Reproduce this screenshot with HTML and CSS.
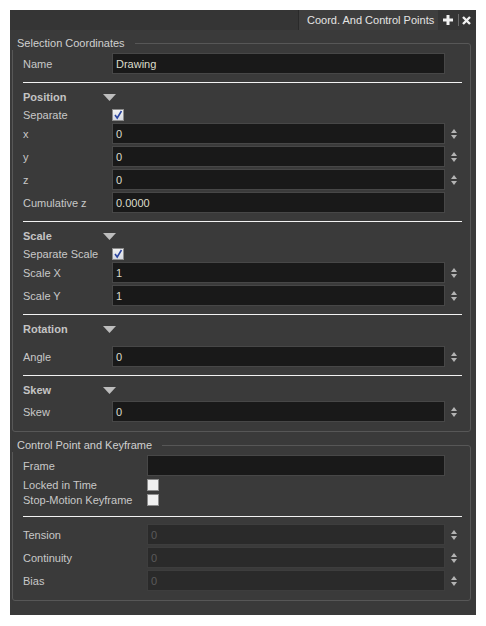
FILE: index.html
```html
<!DOCTYPE html>
<html lang="en">
<head>
    <meta charset="UTF-8">
    <title>Coord. And Control Points</title>
    <link rel="stylesheet" href="styles.css">
</head>
<body>
    <div class="panel">
        <div class="tabbar">
            <div class="tab">Coord. And Control Points</div>
            <div class="tools">
                <svg class="tool" width="10" height="10" viewBox="0 0 10 10"><rect x="3.5" y="0" width="3" height="10" fill="#f0f0f0"/><rect x="0" y="3.5" width="10" height="3" fill="#f0f0f0"/></svg>
                <span class="tool-sep"></span>
                <svg class="tool" width="9" height="9" viewBox="0 0 9 9"><path d="M1 1 L8 8 M8 1 L1 8" stroke="#f0f0f0" stroke-width="2.4"/></svg>
            </div>
        </div>

        <div class="content">
            <!-- Selection Coordinates -->
            <section class="group">
                <div class="group-title">Selection Coordinates</div>
                <div class="group-body">
                    <div class="row"><span>Name</span><div class="field">Drawing</div></div>
                    <div class="sep"></div>

                    <div class="head"><span class="head-name">Position</span><svg class="tri" width="13" height="7" viewBox="0 0 13 7"><polygon points="0,0 13,0 6.5,7" fill="#bdbdbd"/></svg></div>
                    <div class="row check"><span>Separate</span><span class="cb on"><svg width="10" height="10" viewBox="0 0 10 10"><path d="M2 5 L4.2 8 L8.5 1" fill="none" stroke="#2b45a0" stroke-width="1.6"/></svg></span></div>
                    <div class="row"><span>x</span><div class="field">0</div><svg class="spin" width="6" height="10" viewBox="0 0 6 10"><polygon points="0,4 3,0 6,4" fill="#b4b4b4"/><polygon points="0,6 3,10 6,6" fill="#b4b4b4"/></svg></div>
                    <div class="row"><span>y</span><div class="field">0</div><svg class="spin" width="6" height="10" viewBox="0 0 6 10"><polygon points="0,4 3,0 6,4" fill="#b4b4b4"/><polygon points="0,6 3,10 6,6" fill="#b4b4b4"/></svg></div>
                    <div class="row"><span>z</span><div class="field">0</div><svg class="spin" width="6" height="10" viewBox="0 0 6 10"><polygon points="0,4 3,0 6,4" fill="#b4b4b4"/><polygon points="0,6 3,10 6,6" fill="#b4b4b4"/></svg></div>
                    <div class="row"><span>Cumulative z</span><div class="field">0.0000</div></div>
                    <div class="sep"></div>

                    <div class="head"><span class="head-name">Scale</span><svg class="tri" width="13" height="7" viewBox="0 0 13 7"><polygon points="0,0 13,0 6.5,7" fill="#bdbdbd"/></svg></div>
                    <div class="row check"><span>Separate Scale</span><span class="cb on"><svg width="10" height="10" viewBox="0 0 10 10"><path d="M2 5 L4.2 8 L8.5 1" fill="none" stroke="#2b45a0" stroke-width="1.6"/></svg></span></div>
                    <div class="row"><span>Scale X</span><div class="field">1</div><svg class="spin" width="6" height="10" viewBox="0 0 6 10"><polygon points="0,4 3,0 6,4" fill="#b4b4b4"/><polygon points="0,6 3,10 6,6" fill="#b4b4b4"/></svg></div>
                    <div class="row"><span>Scale Y</span><div class="field">1</div><svg class="spin" width="6" height="10" viewBox="0 0 6 10"><polygon points="0,4 3,0 6,4" fill="#b4b4b4"/><polygon points="0,6 3,10 6,6" fill="#b4b4b4"/></svg></div>
                    <div class="sep"></div>

                    <div class="head"><span class="head-name">Rotation</span><svg class="tri" width="13" height="7" viewBox="0 0 13 7"><polygon points="0,0 13,0 6.5,7" fill="#bdbdbd"/></svg></div>
                    <div class="row spaced"><span>Angle</span><div class="field">0</div><svg class="spin" width="6" height="10" viewBox="0 0 6 10"><polygon points="0,4 3,0 6,4" fill="#b4b4b4"/><polygon points="0,6 3,10 6,6" fill="#b4b4b4"/></svg></div>
                    <div class="sep"></div>

                    <div class="head"><span class="head-name">Skew</span><svg class="tri" width="13" height="7" viewBox="0 0 13 7"><polygon points="0,0 13,0 6.5,7" fill="#bdbdbd"/></svg></div>
                    <div class="row"><span>Skew</span><div class="field">0</div><svg class="spin" width="6" height="10" viewBox="0 0 6 10"><polygon points="0,4 3,0 6,4" fill="#b4b4b4"/><polygon points="0,6 3,10 6,6" fill="#b4b4b4"/></svg></div>
                </div>
            </section>

            <!-- Control Point and Keyframe -->
            <section class="group second">
                <div class="group-title">Control Point and Keyframe</div>
                <div class="group-body">
                    <div class="row"><span>Frame</span><div class="field"></div></div>
                    <div class="row check"><span>Locked in Time</span><span class="cb"></span></div>
                    <div class="row check"><span>Stop-Motion Keyframe</span><span class="cb"></span></div>
                    <div class="sep sep-low"></div>
                    <div class="row"><span>Tension</span><div class="field off">0</div><svg class="spin" width="6" height="10" viewBox="0 0 6 10"><polygon points="0,4 3,0 6,4" fill="#b4b4b4"/><polygon points="0,6 3,10 6,6" fill="#b4b4b4"/></svg></div>
                    <div class="row"><span>Continuity</span><div class="field off">0</div><svg class="spin" width="6" height="10" viewBox="0 0 6 10"><polygon points="0,4 3,0 6,4" fill="#b4b4b4"/><polygon points="0,6 3,10 6,6" fill="#b4b4b4"/></svg></div>
                    <div class="row"><span>Bias</span><div class="field off">0</div><svg class="spin" width="6" height="10" viewBox="0 0 6 10"><polygon points="0,4 3,0 6,4" fill="#b4b4b4"/><polygon points="0,6 3,10 6,6" fill="#b4b4b4"/></svg></div>
                </div>
            </section>
        </div>
    </div>
</body>
</html>
```

FILE: styles.css
```css
body {
    margin: 0;
    padding: 10px 0 0 10px;
    background: #ffffff;
    font-family: "Liberation Sans", Arial, sans-serif;
    font-size: 11px;
}
.panel {
    width: 466px;
    height: 605px;
    background: #3a3a3a;
    color: #c8c8c8;
}
.tabbar {
    height: 20px;
    display: flex;
    justify-content: flex-end;
    background: #353535;
}
.tab {
    width: 131px;
    padding-left: 8px;
    display: flex;
    align-items: center;
    background: #3e3e3e;
    border-left: 1px solid #2a2a2a;
    color: #e4e4e4;
    white-space: nowrap;
}
.tools {
    width: 38px;
    display: flex;
    align-items: center;
    padding-left: 5px;
    box-sizing: border-box;
}
.tool-sep {
    width: 1px;
    height: 12px;
    background: #6a6a6a;
    margin: 0 3px 0 5px;
}
.content {
    padding: 13px 5px 0 2px;
}
.group {
    border: 1px solid #575757;
    border-radius: 3px;
}
.group.second {
    margin-top: 13px;
}
.group-title {
    width: fit-content;
    height: 13px;
    line-height: 13px;
    margin: -7px 0 0 -1px;
    padding: 0 10px 0 5px;
    background: #3a3a3a;
    color: #d0d0d0;
    white-space: nowrap;
}
.group-body {
    margin-top: 3px;
    padding: 0 8px 9px 10px;
}
.row {
    display: grid;
    grid-template-columns: 89px 333px 16px;
    align-items: center;
    height: 21px;
    margin-bottom: 2px;
    white-space: nowrap;
}
.row > span {
    padding-top: 1px;
}
.second .row {
    grid-template-columns: 124px 298px 16px;
}
.row:last-child {
    margin-bottom: 0;
}
.row.check {
    height: 14px;
    margin-bottom: 1px;
}
.row.check > span {
    padding-top: 0;
}
.row.spaced {
    margin-top: 9px;
}
.field {
    height: 21px;
    box-sizing: border-box;
    border: 1px solid #474747;
    background: #191919;
    color: #dcdccb;
    padding: 1px 0 0 3px;
    line-height: 19px;
}
.field.off {
    background: #2a2a2a;
    border-color: #3d3d3d;
    color: #5a5a5a;
}
.spin {
    margin-left: 6px;
}
.sep {
    height: 1px;
    background: #f2f2f2;
    margin: 8px 0 6px;
}
.sep.sep-low {
    margin: 9px 0 7px;
}
.head {
    display: flex;
    align-items: center;
    height: 16px;
    margin-bottom: 3px;
    font-weight: bold;
    color: #c4c4c4;
}
.head-name {
    width: 80px;
}
.cb {
    width: 12px;
    height: 12px;
    box-sizing: border-box;
    border: 1px solid #8c8c8c;
    background: #f0f0f0;
    display: flex;
    align-items: center;
    justify-content: center;
}
.cb.on {
    background: linear-gradient(#f2f2f2, #d4d8e0);
}
```
